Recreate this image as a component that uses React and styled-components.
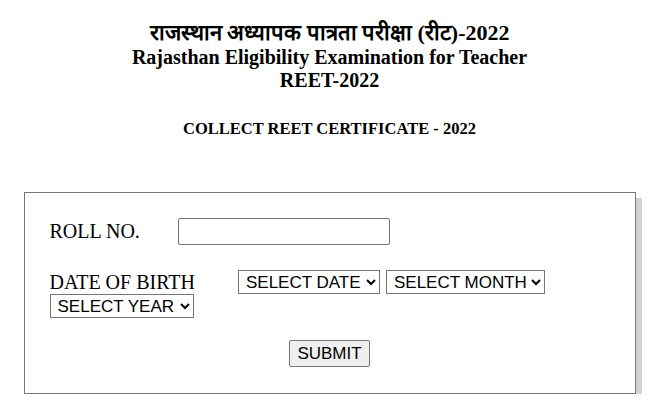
import React from 'react';
import styled, { createGlobalStyle } from 'styled-components';

const Global = createGlobalStyle`
  html, body {
    margin: 0;
    padding: 0;
    background: #fff;
    font-family: "Liberation Serif", "Times New Roman", serif;
    color: #000;
  }
`;

const Page = styled.div`
  width: 659px;
  padding-top: 20px;
`;

const Header = styled.header`
  text-align: center;
  font-weight: bold;
`;

const HindiTitle = styled.div`
  font-size: 22px;
  line-height: 26px;
`;

const Line = styled.div`
  font-size: 20px;
  line-height: 23px;
`;

const SubTitle = styled.div`
  margin-top: 27px;
  text-align: center;
  font-weight: bold;
  font-size: 16.5px;
  line-height: 19px;
`;

const Card = styled.form`
  width: 585px;
  margin: 54px auto 0;
  padding: 25px 0 26px 25px;
  border: 1px solid #777;
  box-shadow: 6px 6px 0 #d3d3d3;
  background: #fff;
`;

const Row = styled.div`
  display: flex;
  flex-wrap: wrap;
  align-items: center;
  margin-bottom: ${({ gap }) => gap || 0}px;
`;

const Label = styled.label`
  font-size: 20px;
  margin-right: ${({ space }) => space}px;
`;

const TextInput = styled.input`
  width: 212px;
  height: 27px;
  box-sizing: border-box;
  border: 1px solid #767676;
  border-radius: 2px;
  padding: 2px 4px;
  font-size: 16px;
`;

const Select = styled.select`
  width: ${({ w }) => w}px;
  height: 24px;
  font-family: Arial, "Liberation Sans", sans-serif;
  font-size: 17px;
  border: 1px solid #767676;
  border-radius: 0;
  background: #fff;
  color: #000;
  margin-right: 6px;
  padding: 0 0 0 3px;
`;

const Actions = styled.div`
  display: flex;
  justify-content: center;
  padding-right: 25px;
  margin-top: 22px;
`;

const Button = styled.button`
  width: 81px;
  height: 27px;
  font-family: Arial, "Liberation Sans", sans-serif;
  font-size: 17px;
  background: #efefef;
  border: 1px solid #767676;
  border-radius: 2px;
  color: #000;
  padding: 0;
`;

const days = Array.from({ length: 31 }, (_, i) => i + 1);
const months = ['JANUARY', 'FEBRUARY', 'MARCH', 'APRIL', 'MAY', 'JUNE', 'JULY', 'AUGUST', 'SEPTEMBER', 'OCTOBER', 'NOVEMBER', 'DECEMBER'];
const years = Array.from({ length: 50 }, (_, i) => 2005 - i);

export default function App() {
  return (
    <Page>
      <Global />
      <Header>
        <HindiTitle>राजस्थान अध्यापक पात्रता परीक्षा (रीट)-2022</HindiTitle>
        <Line>Rajasthan Eligibility Examination for Teacher</Line>
        <Line>REET-2022</Line>
      </Header>
      <SubTitle>COLLECT REET CERTIFICATE - 2022</SubTitle>
      <Card onSubmit={e => e.preventDefault()}>
        <Row gap={25}>
          <Label space={38}>ROLL NO.</Label>
          <TextInput type="text" />
        </Row>
        <Row>
          <Label space={43}>DATE OF BIRTH</Label>
          <Select w={142} defaultValue="">
            <option value="">SELECT DATE</option>
            {days.map(d => <option key={d}>{d}</option>)}
          </Select>
          <Select w={159} defaultValue="">
            <option value="">SELECT MONTH</option>
            {months.map(m => <option key={m}>{m}</option>)}
          </Select>
          <Select w={144} defaultValue="">
            <option value="">SELECT YEAR</option>
            {years.map(y => <option key={y}>{y}</option>)}
          </Select>
        </Row>
        <Actions>
          <Button type="submit">SUBMIT</Button>
        </Actions>
      </Card>
    </Page>
  );
}
